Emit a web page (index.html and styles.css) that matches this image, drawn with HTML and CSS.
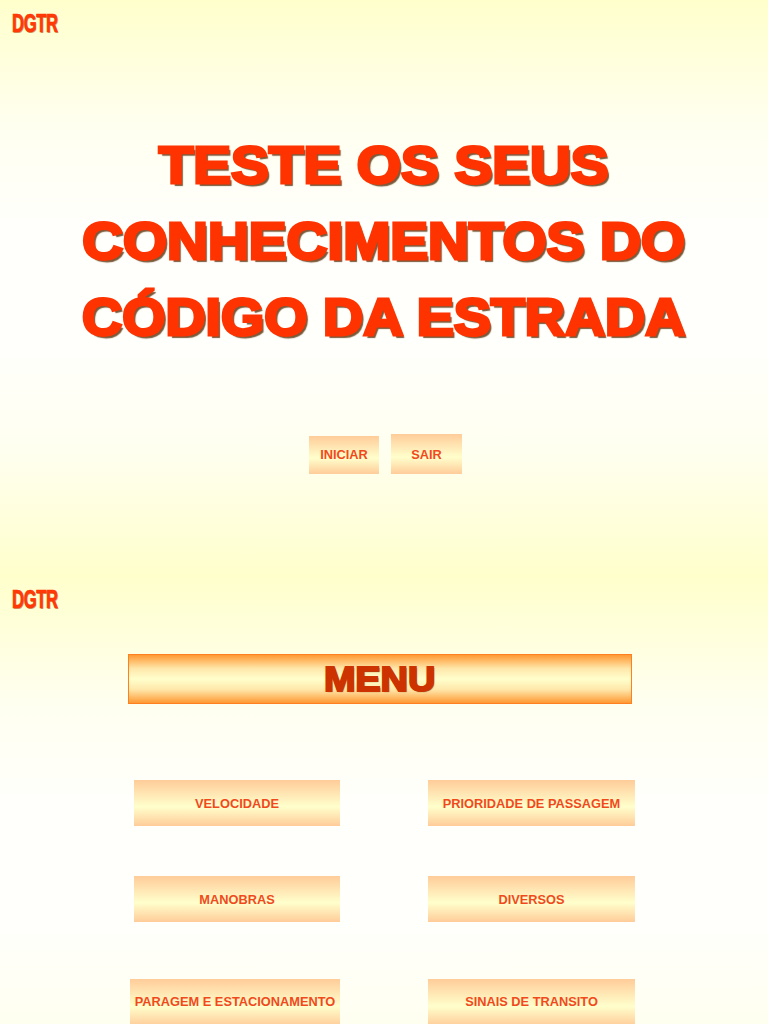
FILE: index.html
```html
<!DOCTYPE html>
<html lang="pt">
<head>
<meta charset="utf-8">
<title>Teste os seus conhecimentos do código da estrada</title>
<link rel="stylesheet" href="styles.css">
</head>
<body>
<section class="slide slide-intro">
  <div class="logo">DGTR</div>
  <h1 class="title">
    <span class="title-line">TESTE OS SEUS</span>
    <span class="title-line">CONHECIMENTOS DO</span>
    <span class="title-line title-line-last">CÓDIGO DA ESTRADA</span>
  </h1>
  <div class="intro-actions">
    <a class="btn btn-start">INICIAR</a>
    <a class="btn btn-exit">SAIR</a>
  </div>
</section>
<section class="slide slide-menu">
  <div class="logo">DGTR</div>
  <h2 class="menu-bar"><span class="menu-label">MENU</span></h2>
  <div class="menu-grid">
    <a class="btn btn-menu">VELOCIDADE</a>
    <a class="btn btn-menu btn-right">PRIORIDADE DE PASSAGEM</a>
    <a class="btn btn-menu">MANOBRAS</a>
    <a class="btn btn-menu btn-right">DIVERSOS</a>
    <a class="btn btn-menu btn-wide">PARAGEM E ESTACIONAMENTO</a>
    <a class="btn btn-menu btn-right">SINAIS DE TRANSITO</a>
  </div>
</section>
</body>
</html>
```
FILE: styles.css
```css
html, body {
  margin: 0;
  padding: 0;
  height: 1024px;
  overflow: hidden;
  font-family: "Liberation Sans", Arial, sans-serif;
}
.slide {
  box-sizing: border-box;
  height: 576px;
  background-image: linear-gradient(180deg, #ffffcc 0%, #fffff0 22%, #fffffc 40%, #fffffc 60%, #fffff0 78%, #ffffcc 100%);
  background-size: 100% 576px;
  background-repeat: no-repeat;
  overflow: hidden;
}
.slide-menu { height: 448px; }
.logo {
  width: 46px;
  height: 20px;
  margin: 13px 0 0 12px;
  font-size: 25px;
  line-height: 21px;
  font-weight: 700;
  letter-spacing: -0.5px;
  white-space: nowrap;
  color: #ff3a08;
  -webkit-text-stroke: 0.7px #ff3300;
  text-shadow: 1px 1px 0 #cc9966;
  transform: scaleX(0.665);
  transform-origin: left top;
}
.title {
  margin: 95px 0 0;
  padding: 0;
  display: flex;
  flex-direction: column;
  align-items: center;
  font-size: 51px;
  font-weight: 700;
  line-height: 76px;
  color: #ff3300;
  -webkit-text-stroke: 3px #ff3300;
  text-shadow: 2.5px 2.5px 1px #7a5a3a;
}
.title-line {
  display: block;
  white-space: nowrap;
  transform: scaleX(1.11);
}
.title-line-last { transform: scaleX(1.09); }
.intro-actions {
  display: flex;
  align-items: flex-end;
  gap: 12px;
  margin: 78px 0 0 309px;
}
.btn {
  display: flex;
  align-items: center;
  justify-content: center;
  box-sizing: border-box;
  font-size: 12.8px;
  font-weight: 700;
  white-space: nowrap;
  color: #f04a1c;
  background: linear-gradient(180deg, #ffcc99 0%, #ffffcc 58%, #ffcc99 100%);
}
.btn-start { width: 70px; height: 38px; padding-bottom: 2px; }
.btn-exit { width: 71px; height: 40px; }
.menu-bar {
  box-sizing: border-box;
  width: 504px;
  height: 50px;
  margin: 45px 0 0 128px;
  display: flex;
  align-items: center;
  justify-content: center;
  padding-bottom: 1px;
  font-size: 35px;
  font-weight: 700;
  color: #cc3300;
  border: 1px solid #ff8020;
  background: linear-gradient(180deg, #ff9933 0%, #ffe7aa 28%, #ffffcc 50%, #ffe7aa 72%, #ff9933 100%);
}
.menu-label {
  display: block;
  transform: scaleX(1.08);
  -webkit-text-stroke: 1.9px #cc3300;
  text-shadow: 1px 1px 1px #664422;
}
.menu-grid {
  display: grid;
  grid-template-columns: 206px 207px;
  column-gap: 88px;
  grid-template-rows: 46px 46px 54px;
  row-gap: 50px;
  margin: 76px 0 0 134px;
}
.btn-wide { width: 210px; margin-left: -4px; }
.btn-menu:nth-child(n+5) { margin-top: 7px; padding-bottom: 2px; }
```
